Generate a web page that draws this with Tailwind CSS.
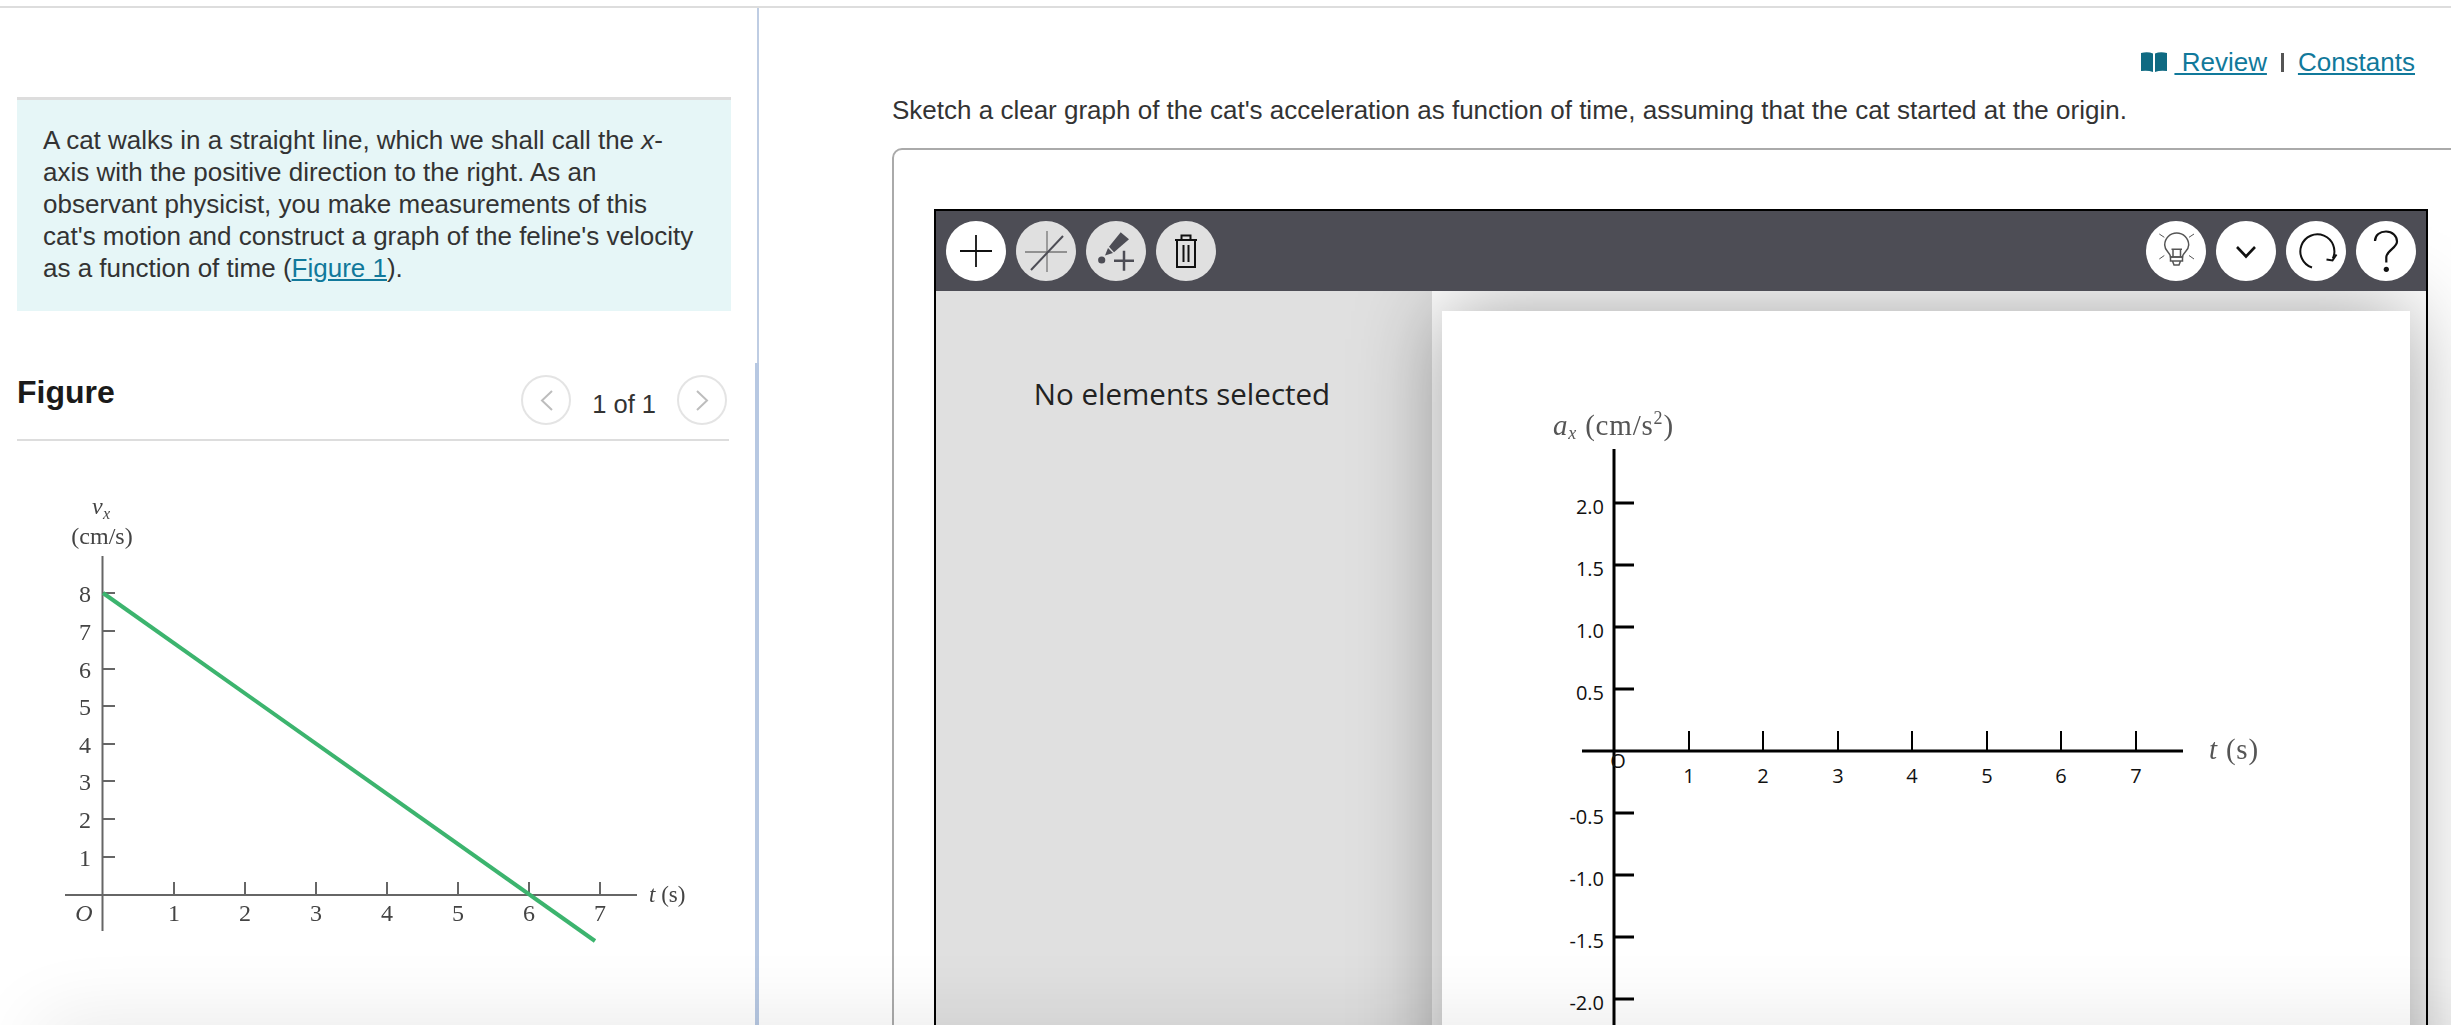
<!DOCTYPE html>
<html lang="en">
<head>
  <meta charset="UTF-8" />
  <title>Cat acceleration graph</title>
  <script src="https://cdn.jsdelivr.net/npm/@tailwindcss/browser@4"></script>
</head>
<body class="bg-white">
<div class="relative w-[2451px] h-[1025px] overflow-hidden bg-white pt-[6px] font-['Liberation_Sans',Arial,sans-serif] text-[#333]">
  <div class="flex h-[1019px] border-t-2 border-[#dddddd]">

    <!-- left column -->
    <div class="relative w-[759px] shrink-0 border-r-2 border-[#bfcde3] pl-[17px]">
      <div class="absolute right-[-2px] top-[355px] bottom-0 w-[4px] bg-[#b7c8e2]"></div>

      <div class="w-[714px] mt-[89px] border-t-[3px] border-[#dddddd] bg-[#e6f6f7] pl-[26px] pr-[33px] pt-[24px] pb-[27px] text-[26px] leading-[32px]">
        A cat walks in a straight line, which we shall call the <i>x</i>-axis with the positive direction to the right. As an observant physicist, you make measurements of this cat's motion and construct a graph of the feline's velocity as a function of time (<a href="#" class="text-[#11799b] underline">Figure 1</a>).
      </div>

      <div class="w-[712px] mt-[64px] flex justify-between items-start border-b-2 border-[#dddddd] pb-[14px]">
        <h2 class="text-[32px] leading-[36px] font-bold text-[#1a1a1a] -mt-[1px]">Figure</h2>
        <div class="flex items-center gap-[21px] pr-[2px]">
          <button class="w-[50px] h-[50px] rounded-full border-2 border-[#e4e4e4] flex items-center justify-center">
            <svg width="13" height="21" viewBox="0 0 13 21" fill="none" stroke="#bdbdbd" stroke-width="2"><path d="M12 1 L2 10.5 L12 20"/></svg>
          </button>
          <span class="w-[64px] text-right text-[25.500px] leading-[32px] mt-[8px]">1 of 1</span>
          <button class="w-[50px] h-[50px] rounded-full border-2 border-[#e4e4e4] flex items-center justify-center">
            <svg width="13" height="21" viewBox="0 0 13 21" fill="none" stroke="#bdbdbd" stroke-width="2"><path d="M1 1 L11 10.5 L1 20"/></svg>
          </button>
        </div>
      </div>

      <!-- velocity figure, viewBox uses page coordinates -->
      <svg class="block blur-[0.5px]" width="700" height="560" viewBox="17 442 700 560" font-family="'Liberation Serif',serif" font-size="24" fill="#444">
        <g stroke="#666" stroke-width="2" fill="none">
          <path d="M102.500 557V932M65 896H637"/>
          <path d="M102 594H115M102 632H115M102 670H115M102 707H115M102 745H115M102 782H115M102 820H115M102 858H115"/>
          <path d="M174 883V896M245 883V896M316 883V896M387 883V896M458 883V896M529 883V896M600 883V896"/>
        </g>
        <path d="M103 594L595 942" stroke="#3cb46e" stroke-width="4" fill="none"/>
        <g text-anchor="middle">
          <text x="85" y="603">8</text><text x="85" y="641">7</text><text x="85" y="679">6</text><text x="85" y="716">5</text>
          <text x="85" y="754">4</text><text x="85" y="791">3</text><text x="85" y="829">2</text><text x="85" y="867">1</text>
          <text x="174" y="922">1</text><text x="245" y="922">2</text><text x="316" y="922">3</text><text x="387" y="922">4</text>
          <text x="458" y="922">5</text><text x="529" y="922">6</text><text x="600" y="922">7</text>
          <text x="84" y="922" font-style="italic">O</text>
          <text x="102" y="545">(cm/s)</text>
        </g>
        <text x="92" y="515" font-style="italic">v</text>
        <text x="103" y="520" font-style="italic" font-size="16">x</text>
        <text x="649" y="903" font-size="23"><tspan font-style="italic">t</tspan> (s)</text>
      </svg>
    </div>

    <!-- right column -->
    <div class="flex-1 min-w-0">
      <div class="flex justify-end items-center pt-[38px] pr-[36px] text-[26px] leading-[32px]">
        <svg class="mr-[7px] blur-[0.4px]" width="26" height="21" viewBox="0 0 26 21" fill="#0f6a82"><path d="M0 1 Q7 -0.500 12 1.500 V20 Q7 18 0 19Z"/><path d="M26 1 Q19 -0.500 14 1.500 V20 Q19 18 26 19Z"/></svg>
        <a href="#" class="text-[#11799b] underline">&nbsp;Review</a>
        <span class="mx-[14px] w-[3px] h-[19px] bg-[#555]"></span>
        <a href="#" class="text-[#11799b] underline">Constants</a>
      </div>
      <p class="pl-[133px] mt-[16px] text-[26px] leading-[32px]">Sketch a clear graph of the cat's acceleration as function of time, assuming that the cat started at the origin.</p>

      <div class="ml-[133px] mt-[22px] w-[1700px] h-[1000px] border-2 border-[#aaaaaa] rounded-tl-[10px] pl-[40px] pt-[59px]">
        <div class="w-[1494px] h-[900px] border-2 border-black">
          <!-- toolbar -->
          <div class="relative z-20 h-[80px] bg-[#4d4d55] flex items-center justify-between px-[10px]">
            <div class="flex gap-[10px]">
              <button class="w-[60px] h-[60px] rounded-full bg-white">
                <svg width="60" height="60" viewBox="0 0 60 60" fill="none" stroke="#111" stroke-width="1.800"><path d="M14 30H46M30 14V46"/></svg>
              </button>
              <button class="w-[60px] h-[60px] rounded-full bg-[#e0e0e0]">
                <svg width="60" height="60" viewBox="0 0 60 60" fill="none"><path d="M9 31H51M31 10V51" stroke="#777" stroke-width="1.300"/><path d="M15 49L47 15" stroke="#4d4d55" stroke-width="2"/></svg>
              </button>
              <button class="w-[60px] h-[60px] rounded-full bg-[#e0e0e0]">
                <svg width="60" height="60" viewBox="0 0 60 60" fill="#4d4d55"><path d="M34.700 11.300L43 18.300L28 31.300L23 25.700Z"/><path d="M22 27L27 32L19 34.500Z"/><circle cx="15.700" cy="39" r="3.600"/><path d="M28 39.700H48M38 29.700V49.700" stroke="#4d4d55" stroke-width="2.500" fill="none"/></svg>
              </button>
              <button class="w-[60px] h-[60px] rounded-full bg-[#e0e0e0]">
                <svg width="60" height="60" viewBox="0 0 60 60" fill="none" stroke="#111" stroke-width="2"><path d="M19 19H41M21 19V46H39V19M25.500 19V14.500H34.500V19M27.500 24V41M32.500 24V41"/></svg>
              </button>
            </div>
            <div class="flex gap-[10px]">
              <button class="w-[60px] h-[60px] rounded-full bg-white">
                <svg width="60" height="60" viewBox="0 0 60 60" fill="none" stroke="#555" stroke-width="1.500"><path d="M24.500 36C24 31 18.700 30 18.700 24A12 12 0 0 1 42.700 24C42.700 30 37 31 36.500 36Z"/><path d="M25.500 28.300H36M27 28.300V36M34.500 28.300V36M24.500 36H36.500V40H24.500ZM26.500 40L28 44H33L34.500 40"/><path d="M13.300 13L18.300 16.300M48 13L43 16.300M13.300 38L18.300 34.500M48 38L43 34.500" stroke-width="1"/></svg>
              </button>
              <button class="w-[60px] h-[60px] rounded-full bg-white">
                <svg width="60" height="60" viewBox="0 0 60 60" fill="none" stroke="#111" stroke-width="2.600"><path d="M21 26L30 35.500L39 26"/></svg>
              </button>
              <button class="w-[60px] h-[60px] rounded-full bg-white">
                <svg width="60" height="60" viewBox="0 0 60 60" fill="none" stroke="#111" stroke-width="2"><path d="M26 46.500A17 17 0 1 1 46.800 37.500"/><path d="M40.500 38.500L46.500 39.500L50.500 33.500"/></svg>
              </button>
              <button class="w-[60px] h-[60px] rounded-full bg-white">
                <svg width="60" height="60" viewBox="0 0 60 60" fill="none" stroke="#111" stroke-width="2.200"><path d="M19 20C19 14 24 10.500 30 10.500C36.500 10.500 41 15 41 20.500C41 27 31 29 30.300 36V41.500"/><circle cx="30.300" cy="48.300" r="2.600" fill="#111" stroke="none"/></svg>
              </button>
            </div>
          </div>
          <!-- editor body -->
          <div class="flex h-[816px]">
            <div class="w-[496px] shrink-0 bg-[#e0e0e0] text-center pr-[4px] pt-[84px] font-['Open_Sans',sans-serif] text-[29.500px] leading-[38px] text-[#222]">No elements selected</div>
            <div class="flex-1 bg-white pt-[20px] pl-[10px] pr-[16px]">
              <div class="relative z-10 h-[800px] bg-white shadow-[0_0_80px_rgba(0,0,0,0.38)]">
                <!-- acceleration axes, viewBox uses page coordinates -->
                <svg class="block" width="968" height="714" viewBox="1443 311 968 714" font-family="'Open Sans',sans-serif" font-size="20" fill="#111">
                  <g stroke="#000" fill="none">
                    <path d="M1615 449V1025M1583 751H2184" stroke-width="3"/>
                    <path d="M1615 503H1635M1615 565H1635M1615 627H1635M1615 689H1635M1615 813H1635M1615 875H1635M1615 937H1635M1615 999H1635" stroke-width="3"/>
                    <path d="M1690 731V751M1764 731V751M1839 731V751M1913 731V751M1988 731V751M2062 731V751M2137 731V751" stroke-width="2"/>
                  </g>
                  <g text-anchor="end">
                    <text x="1605" y="514">2.0</text><text x="1605" y="576">1.5</text><text x="1605" y="638">1.0</text><text x="1605" y="700">0.5</text>
                    <text x="1605" y="824">-0.5</text><text x="1605" y="886">-1.0</text><text x="1605" y="948">-1.5</text><text x="1605" y="1010">-2.0</text>
                  </g>
                  <g text-anchor="middle">
                    <text x="1690" y="783">1</text><text x="1764" y="783">2</text><text x="1839" y="783">3</text><text x="1913" y="783">4</text>
                    <text x="1988" y="783">5</text><text x="2062" y="783">6</text><text x="2137" y="783">7</text>
                    <text x="1619" y="768">O</text>
                  </g>
                  <g class="blur-[0.5px]" font-family="'Liberation Serif',serif" font-size="29" fill="#555" letter-spacing="0.800">
                    <text x="1554" y="435"><tspan font-style="italic">a</tspan><tspan font-style="italic" font-size="18" dy="4">x</tspan><tspan dy="-4"> (cm/s</tspan><tspan font-size="18" dy="-11">2</tspan><tspan dy="11">)</tspan></text>
                    <text x="2210" y="759"><tspan font-style="italic">t</tspan> (s)</text>
                  </g>
                </svg>
              </div>
            </div>
          </div>
        </div>
      </div>
    </div>
  </div>

  <!-- fixed footer sits just below the window, only its shadow shows -->
  <div class="absolute z-30 left-[40px] right-[-40px] top-[1025px] h-[60px] shadow-[0_0_80px_rgba(0,0,0,0.11)]"></div>
</div>
</body>
</html>
